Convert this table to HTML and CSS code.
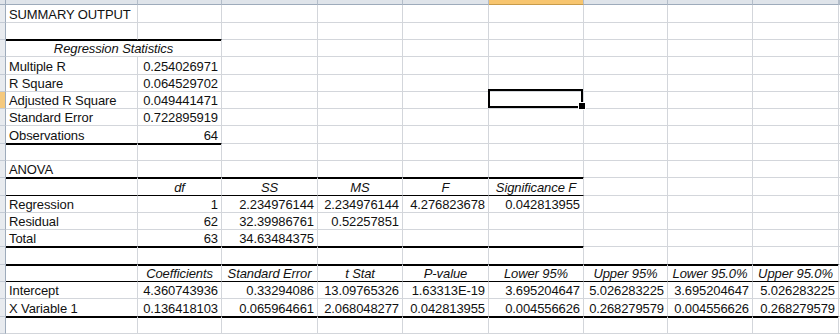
FILE: index.html
```html
<!DOCTYPE html>
<html>
<head>
<meta charset="utf-8">
<link rel="stylesheet" href="styles.css">
</head>
<body>
<div class="sheet">
  <div class="row hdr">
    <div class="c corner"></div>
    <div class="c ch"></div>
    <div class="c ch"></div>
    <div class="c ch"></div>
    <div class="c ch"></div>
    <div class="c ch"></div>
    <div class="c ch sel"></div>
    <div class="c ch"></div>
    <div class="c ch"></div>
    <div class="c ch"></div>
    <div class="c ch"></div>
  </div>
  <div class="row h18">
    <div class="c rh"></div>
    <div class="c">SUMMARY OUTPUT</div>
    <div class="c"></div><div class="c"></div><div class="c"></div><div class="c"></div>
    <div class="c"></div><div class="c"></div><div class="c"></div><div class="c"></div><div class="c"></div>
  </div>
  <div class="row">
    <div class="c rh"></div>
    <div class="c thick"></div><div class="c thick"></div>
    <div class="c"></div><div class="c"></div><div class="c"></div>
    <div class="c"></div><div class="c"></div><div class="c"></div><div class="c"></div><div class="c"></div>
  </div>
  <div class="row">
    <div class="c rh"></div>
    <div class="c span2 ctr">Regression Statistics</div>
    <div class="c"></div><div class="c"></div><div class="c"></div>
    <div class="c"></div><div class="c"></div><div class="c"></div><div class="c"></div><div class="c"></div>
  </div>
  <div class="row h18">
    <div class="c rh"></div>
    <div class="c">Multiple R</div><div class="c num">0.254026971</div>
    <div class="c"></div><div class="c"></div><div class="c"></div>
    <div class="c"></div><div class="c"></div><div class="c"></div><div class="c"></div><div class="c"></div>
  </div>
  <div class="row">
    <div class="c rh"></div>
    <div class="c">R Square</div><div class="c num">0.064529702</div>
    <div class="c"></div><div class="c"></div><div class="c"></div>
    <div class="c"></div><div class="c"></div><div class="c"></div><div class="c"></div><div class="c"></div>
  </div>
  <div class="row">
    <div class="c rh rsel"></div>
    <div class="c">Adjusted R Square</div><div class="c num">0.049441471</div>
    <div class="c"></div><div class="c"></div><div class="c"></div>
    <div class="c active"></div><div class="c"></div><div class="c"></div><div class="c"></div><div class="c"></div>
  </div>
  <div class="row">
    <div class="c rh"></div>
    <div class="c">Standard Error</div><div class="c num">0.722895919</div>
    <div class="c"></div><div class="c"></div><div class="c"></div>
    <div class="c"></div><div class="c"></div><div class="c"></div><div class="c"></div><div class="c"></div>
  </div>
  <div class="row h18">
    <div class="c rh"></div>
    <div class="c thick">Observations</div><div class="c num thick">64</div>
    <div class="c"></div><div class="c"></div><div class="c"></div>
    <div class="c"></div><div class="c"></div><div class="c"></div><div class="c"></div><div class="c"></div>
  </div>
  <div class="row">
    <div class="c rh"></div>
    <div class="c"></div><div class="c"></div><div class="c"></div><div class="c"></div><div class="c"></div>
    <div class="c"></div><div class="c"></div><div class="c"></div><div class="c"></div><div class="c"></div>
  </div>
  <div class="row">
    <div class="c rh"></div>
    <div class="c thick">ANOVA</div><div class="c thick"></div><div class="c thick"></div><div class="c thick"></div><div class="c thick"></div>
    <div class="c thick"></div><div class="c"></div><div class="c"></div><div class="c"></div><div class="c"></div>
  </div>
  <div class="row h18">
    <div class="c rh"></div>
    <div class="c thin"></div>
    <div class="c ctr thin">df</div>
    <div class="c ctr thin">SS</div>
    <div class="c ctr thin">MS</div>
    <div class="c ctr thin">F</div>
    <div class="c ctr thin">Significance F</div>
    <div class="c"></div><div class="c"></div><div class="c"></div><div class="c"></div>
  </div>
  <div class="row">
    <div class="c rh"></div>
    <div class="c">Regression</div>
    <div class="c num">1</div>
    <div class="c num">2.234976144</div>
    <div class="c num">2.234976144</div>
    <div class="c num">4.276823678</div>
    <div class="c num">0.042813955</div>
    <div class="c"></div><div class="c"></div><div class="c"></div><div class="c"></div>
  </div>
  <div class="row">
    <div class="c rh"></div>
    <div class="c">Residual</div>
    <div class="c num">62</div>
    <div class="c num">32.39986761</div>
    <div class="c num">0.52257851</div>
    <div class="c"></div>
    <div class="c"></div>
    <div class="c"></div><div class="c"></div><div class="c"></div><div class="c"></div>
  </div>
  <div class="row">
    <div class="c rh"></div>
    <div class="c thick">Total</div>
    <div class="c num thick">63</div>
    <div class="c num thick">34.63484375</div>
    <div class="c thick"></div>
    <div class="c thick"></div>
    <div class="c thick"></div>
    <div class="c"></div><div class="c"></div><div class="c"></div><div class="c"></div>
  </div>
  <div class="row h18">
    <div class="c rh"></div>
    <div class="c thick"></div><div class="c thick"></div><div class="c thick"></div><div class="c thick"></div><div class="c thick"></div>
    <div class="c thick"></div><div class="c thick"></div><div class="c thick"></div><div class="c thick"></div><div class="c"></div>
  </div>
  <div class="row">
    <div class="c rh"></div>
    <div class="c thin"></div>
    <div class="c ctr thin">Coefficients</div>
    <div class="c ctr thin">Standard Error</div>
    <div class="c ctr thin">t Stat</div>
    <div class="c ctr thin">P-value</div>
    <div class="c ctr thin">Lower 95%</div>
    <div class="c ctr thin">Upper 95%</div>
    <div class="c ctr thin">Lower 95.0%</div>
    <div class="c ctr thin">Upper 95.0%</div>
    <div class="c"></div>
  </div>
  <div class="row">
    <div class="c rh"></div>
    <div class="c">Intercept</div>
    <div class="c num">4.360743936</div>
    <div class="c num">0.33294086</div>
    <div class="c num">13.09765326</div>
    <div class="c num">1.63313E-19</div>
    <div class="c num">3.695204647</div>
    <div class="c num">5.026283225</div>
    <div class="c num">3.695204647</div>
    <div class="c num">5.026283225</div>
    <div class="c"></div>
  </div>
  <div class="row h18">
    <div class="c rh"></div>
    <div class="c thick">X Variable 1</div>
    <div class="c num thick">0.136418103</div>
    <div class="c num thick">0.065964661</div>
    <div class="c num thick">2.068048277</div>
    <div class="c num thick">0.042813955</div>
    <div class="c num thick">0.004556626</div>
    <div class="c num thick">0.268279579</div>
    <div class="c num thick">0.004556626</div>
    <div class="c num thick">0.268279579</div>
    <div class="c"></div>
  </div>
  <div class="row">
    <div class="c rh"></div>
    <div class="c"></div><div class="c"></div><div class="c"></div><div class="c"></div><div class="c"></div>
    <div class="c"></div><div class="c"></div><div class="c"></div><div class="c"></div><div class="c"></div>
  </div>
</div>
</body>
</html>
```

FILE: styles.css
```css
* { box-sizing: border-box; }
html, body { margin: 0; padding: 0; background: #fff; }
body {
  width: 840px;
  height: 334px;
  overflow: hidden;
  font-family: "Liberation Sans", Arial, sans-serif;
  font-size: 13px;
  color: #111;
}
.sheet { display: flex; flex-direction: column; }
.row {
  display: grid;
  grid-template-columns: 6px 132px 84px 96px 85px 86px 95px 84px 85px 86px 1fr;
  height: 17px;
  flex: none;
}
.row.h18 { height: 18px; }
.row.hdr { height: 5px; }
.c {
  min-width: 0;
  border-right: 1px solid #d3d6db;
  border-bottom: 1px solid #d3d6db;
  padding: 0 3px;
  display: flex;
  align-items: flex-end;
  white-space: nowrap;
  line-height: 15px;
  letter-spacing: -0.1px;
}
.num { justify-content: flex-end; }
.ctr { justify-content: center; font-style: italic; }
.span2 { grid-column: span 2; }
.thin { border-bottom-color: #000; }
.thick { border-bottom-color: #000; box-shadow: 0 1px 0 #000; }
.rh {
  padding: 0;
  background: #e8ebef;
  border-right-color: #9eabbb;
  border-bottom-color: #c4cbd5;
}
.rh.rsel { background: #f5c97e; }
.corner {
  padding: 0;
  background: #dfe3e9;
  border-right-color: #9eabbb;
  border-bottom-color: #9eabbb;
}
.ch {
  padding: 0;
  background: #dfe4ea;
  border-right-color: #b3bdc9;
  border-bottom-color: #9eabbb;
}
.ch.sel { background: #f7c56f; border-bottom-color: #c89b4a; }
.active { position: relative; }
.active::after {
  content: "";
  position: absolute;
  left: -1px;
  right: 0;
  top: -3px;
  bottom: 0;
  border: 2px solid #000;
}
.active::before {
  content: "";
  position: absolute;
  right: -3px;
  bottom: -2px;
  width: 6px;
  height: 6px;
  background: #000;
  border: 1px solid #fff;
  z-index: 2;
}
```
